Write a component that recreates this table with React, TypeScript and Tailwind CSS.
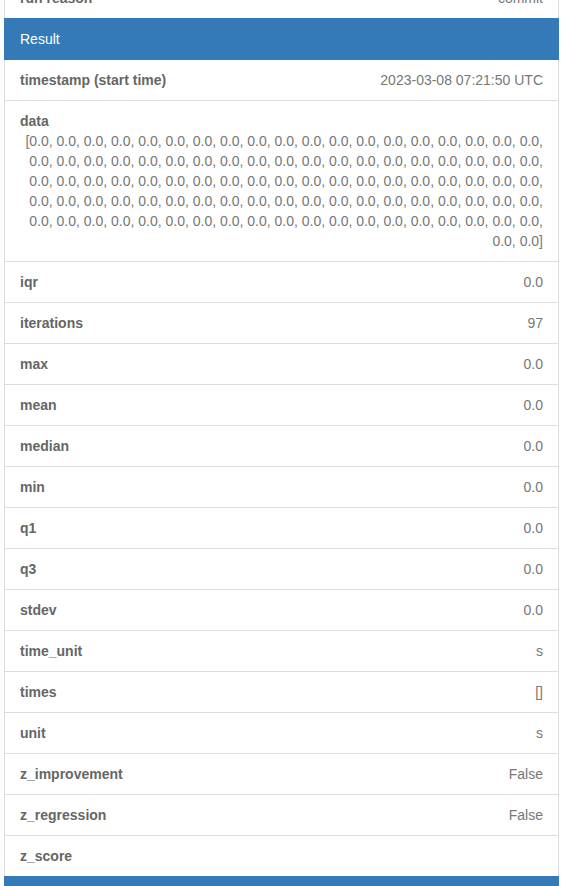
import React from 'react';

const rows: [string, string][] = [
  ['iqr', '0.0'],
  ['iterations', '97'],
  ['max', '0.0'],
  ['mean', '0.0'],
  ['median', '0.0'],
  ['min', '0.0'],
  ['q1', '0.0'],
  ['q3', '0.0'],
  ['stdev', '0.0'],
  ['time_unit', 's'],
  ['times', '[]'],
  ['unit', 's'],
  ['z_improvement', 'False'],
  ['z_regression', 'False'],
  ['z_score', ''],
];

const data = '[' + Array.from({ length: 97 }, () => '0.0').join(', ') + ']';

const Row = ({ label, value }: { label: string; value: string }) => (
  <div className="flex items-center justify-between border-b border-[#ddd] px-[15px] py-[10px] leading-5">
    <span className="font-bold text-[#666]">{label}</span>
    <span className="text-[#777]">{value}</span>
  </div>
);

export default function App() {
  return (
    <div
      className="min-h-screen bg-white text-[14px]"
      style={{ fontFamily: '"Liberation Sans", Arial, sans-serif' }}
    >
      <div className="ml-[4px] -mt-[22px] w-[555px] border-x border-[#ddd]">
        <Row label="run reason" value="commit" />
        <div className="-mx-px -mt-px bg-[#337ab7] px-4 py-[11px] leading-5 text-white">Result</div>
        <Row label="timestamp (start time)" value="2023-03-08 07:21:50 UTC" />
        <div className="border-b border-[#ddd] px-[15px] py-[10px] leading-5">
          <div className="font-bold text-[#666]">data</div>
          <div className="text-right text-[#777]">{data}</div>
        </div>
        {rows.map(([label, value]) => (
          <Row key={label} label={label} value={value} />
        ))}
        <div className="-mx-px -mt-px h-[42px] bg-[#337ab7]" />
      </div>
    </div>
  );
}
